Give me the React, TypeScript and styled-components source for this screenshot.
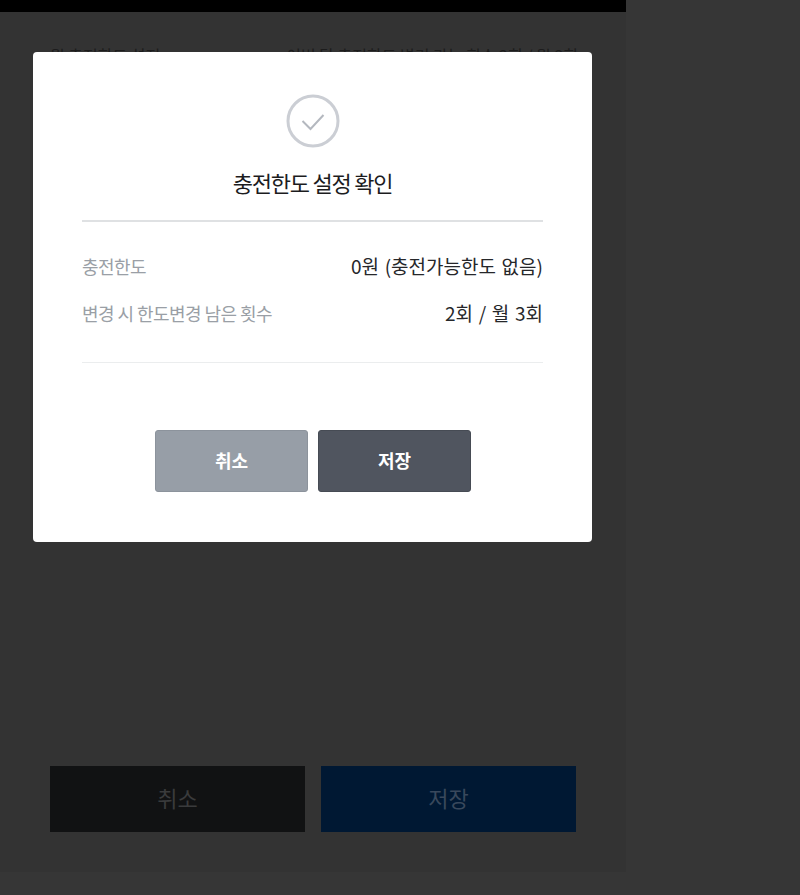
import styled, { createGlobalStyle } from 'styled-components';

const GlobalStyle = createGlobalStyle`
  html, body {
    margin: 0;
    padding: 0;
    height: 100%;
    background: #363636;
  }
  body {
    font-family: "Noto Sans CJK KR", "Noto Sans", sans-serif;
  }
`;

const Page = styled.div`
  position: relative;
  width: 800px;
  height: 895px;
  overflow: hidden;
  background: #363636;
`;

const Screen = styled.div`
  width: 626px;
  height: 872px;
  background: #333333;
  display: flex;
  flex-direction: column;
`;

const TopBar = styled.div`
  height: 12px;
  background: #000000;
`;

const HiddenRow = styled.div`
  display: flex;
  justify-content: space-between;
  padding: 32px 48px 0 50px;
  height: 722px;
  box-sizing: content-box;
  font-size: 16px;
  color: #1c1c1c;
  line-height: 22px;
  white-space: nowrap;
`;

const Footer = styled.div`
  display: flex;
  gap: 16px;
  padding: 0 50px;
`;

const FooterButton = styled.div<{ $primary?: boolean }>`
  flex: 1;
  height: 66px;
  box-sizing: border-box;
  padding-bottom: 4px;
  display: flex;
  align-items: center;
  justify-content: center;
  font-size: 22px;
  color: ${(p) => (p.$primary ? '#39485c' : '#3a3b3c')};
  background: ${(p) => (p.$primary ? '#001833' : '#111213')};
`;

const Modal = styled.div`
  position: absolute;
  left: 33px;
  top: 52px;
  width: 559px;
  height: 490px;
  box-sizing: border-box;
  padding: 42px 49px 0;
  background: #ffffff;
  border-radius: 4px;
  display: flex;
  flex-direction: column;
`;

const IconWrap = styled.div`
  display: flex;
  justify-content: center;
  height: 54px;
`;

const ModalTitle = styled.h2`
  margin: 18px 0 0;
  height: 54px;
  font-size: 22px;
  font-weight: 400;
  line-height: 32px;
  letter-spacing: -1.25px;
  text-align: center;
  color: #1c1c1e;
`;

const Rows = styled.div`
  border-top: 2px solid #dfe1e3;
  border-bottom: 1px solid #ebedee;
  height: 143px;
  box-sizing: border-box;
  padding-top: 29px;
  display: flex;
  flex-direction: column;
  gap: 17px;
`;

const Row = styled.div`
  display: flex;
  justify-content: space-between;
  line-height: 30px;
`;

const Label = styled.span`
  font-size: 18px;
  color: #9a9fa6;
  letter-spacing: -0.55px;
`;

const Value = styled.span`
  font-size: 19px;
  color: #26272a;
  word-spacing: 1.4px;
`;

const Actions = styled.div`
  display: flex;
  justify-content: center;
  gap: 10px;
  margin-top: 67px;
`;

const ActionButton = styled.button<{ $dark?: boolean }>`
  width: 153px;
  height: 62px;
  padding: 0 0 3px 1px;
  border: 1px solid ${(p) => (p.$dark ? '#464b54' : '#8c939c')};
  border-radius: 3px;
  font-family: inherit;
  font-size: 18px;
  font-weight: 700;
  color: #ffffff;
  background: ${(p) => (p.$dark ? '#50555f' : '#979ea7')};
`;

const CheckIcon = () => (
  <svg width="54" height="54" viewBox="0 0 54 54" fill="none">
    <circle cx="27" cy="27" r="25" stroke="#cbced4" strokeWidth="3" />
    <path d="M16.5 27L24.5 35L37.5 21" stroke="#b4b8bf" strokeWidth="2" />
  </svg>
);

export default function App() {
  return (
    <Page>
      <GlobalStyle />
      <Screen>
        <TopBar />
        <HiddenRow>
          <span>월 충전한도 설정</span>
          <span>이번 달 충전한도 변경 가능 횟수 2회 / 월 3회</span>
        </HiddenRow>
        <Footer>
          <FooterButton>취소</FooterButton>
          <FooterButton $primary>저장</FooterButton>
        </Footer>
      </Screen>
      <Modal>
        <IconWrap>
          <CheckIcon />
        </IconWrap>
        <ModalTitle>충전한도 설정 확인</ModalTitle>
        <Rows>
          <Row>
            <Label>충전한도</Label>
            <Value>0원 (충전가능한도 없음)</Value>
          </Row>
          <Row>
            <Label>변경 시 한도변경 남은 횟수</Label>
            <Value>2회 / 월 3회</Value>
          </Row>
        </Rows>
        <Actions>
          <ActionButton>취소</ActionButton>
          <ActionButton $dark>저장</ActionButton>
        </Actions>
      </Modal>
    </Page>
  );
}
